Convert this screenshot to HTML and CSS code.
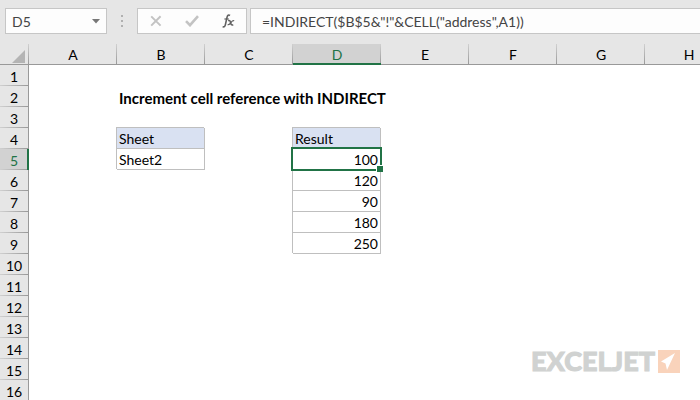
FILE: index.html
```
<!DOCTYPE html>
<html lang="en">
<head>
<meta charset="UTF-8">
<meta name="viewport" content="width=device-width, initial-scale=1">
<title>Increment cell reference with INDIRECT</title>
<link rel="stylesheet" href="styles.css">
</head>

<body>

    <!-- Name box, entry buttons and formula -->
    <div class="formula-bar">
        <div class="name-box">
            <input class="name-box__input" type="text" value="D5" aria-label="Name box">
            <button class="name-box__arrow" type="button" aria-label="Open name list">
                <svg width="8" height="5" viewBox="0 0 8 5"><path d="M0 0h8L4 4.6z" fill="#777"/></svg>
            </button>
        </div>

        <svg class="grip" width="2" height="12" viewBox="0 0 2 12"><path d="M0 0h2v2H0zM0 5h2v2H0zM0 10h2v2H0z" fill="#b0b0b0"/></svg>

        <div class="entry-buttons">
            <button type="button" aria-label="Cancel">
                <svg width="12" height="12" viewBox="0 0 12 12"><path d="M1.2 1.4l9.4 9.2M10.6 1.2L1.2 10.6" fill="none" stroke="#c3c3c3" stroke-width="2"/></svg>
            </button>
            <button type="button" aria-label="Enter">
                <svg width="14" height="12" viewBox="0 0 14 12"><path d="M1 6.2l4 4L13 1.2" fill="none" stroke="#c3c3c3" stroke-width="2.6"/></svg>
            </button>
            <button type="button" aria-label="Insert function">
                <svg width="13" height="14" viewBox="0 0 13 14" fill="none" stroke="#606060">
                    <path d="M8 1.5C6.6.4 5.5 1.2 5 3.4L3.4 10.6C3 12.7 2 13.4.6 12.6" stroke-width="1.6"/>
                    <path d="M2.4 5h4.4" stroke-width="1.2"/>
                    <path d="M6.2 6.8c1.6-.8 2 .2 2.4 2s1 2.8 2.6 1.8" stroke-width="1.6"/>
                    <path d="M12.2 6.8c-1.8-.6-2.6 1-3.6 2.2s-1.6 2.2-3 1.6" stroke-width="1.2"/>
                </svg>
            </button>
        </div>

        <input class="formula-input" type="text" value="=INDIRECT($B$5&amp;&quot;!&quot;&amp;CELL(&quot;address&quot;,A1))" aria-label="Formula">
    </div>

    <div class="sheet">
        <table class="grid">
            <thead>
                <tr>
                    <th class="corner"><svg width="13" height="13" viewBox="0 0 13 13"><path d="M13 0v13H0z" fill="#b4b4b4"/></svg></th>
                    <th>A</th><th>B</th><th>C</th><th class="active">D</th><th>E</th><th>F</th><th>G</th><th>H</th>
                </tr>
            </thead>
            <tbody>
                <tr><th>1</th></tr>
                <tr><th>2</th><td></td><td class="title">Increment cell reference with INDIRECT</td></tr>
                <tr><th>3</th></tr>
                <tr><th>4</th><td></td><td class="boxed heading">Sheet</td><td></td><td class="boxed heading">Result</td></tr>
                <tr><th class="active">5</th><td></td><td class="boxed">Sheet2</td><td></td><td class="boxed number selected">100</td></tr>
                <tr><th>6</th><td></td><td></td><td></td><td class="boxed number">120</td></tr>
                <tr><th>7</th><td></td><td></td><td></td><td class="boxed number">90</td></tr>
                <tr><th>8</th><td></td><td></td><td></td><td class="boxed number">180</td></tr>
                <tr><th>9</th><td></td><td></td><td></td><td class="boxed number">250</td></tr>
                <tr><th>10</th></tr>
                <tr><th>11</th></tr>
                <tr><th>12</th></tr>
                <tr><th>13</th></tr>
                <tr><th>14</th></tr>
                <tr><th>15</th></tr>
                <tr><th>16</th></tr>
            </tbody>
        </table>

        <div class="logo">
            <span>EXCELJET</span>
            <svg width="22" height="23" viewBox="0 0 22 23"><path d="M0 0h22v23H0z" fill="#f9d3bb"/><path d="M17 3L3 11.5l4.5 2L9 20z" fill="#fff"/></svg>
        </div>
    </div>

</body>
</html>
```

FILE: styles.css
```
:root
{
    --chrome: #e6e6e6;
    --chrome-active: #d2d2d2;
    --line: #999999;
    --box-border: #c6c6c6;
    --cell-border: #bfbfbf;
    --green: #217346;
}

*
{
    box-sizing: border-box;
}

body
{
    margin: 0;
    background: #ffffff;
    color: #000000;
    font-family: Lato, "Liberation Sans", sans-serif;
    font-size: 14px;
    overflow: hidden;
}

button, input
{
    border: none;
    padding: 0;
    background: none;
    font: inherit;
    color: #444444;
}

svg
{
    display: block;
}

/* Formula bar */

.formula-bar
{
    display: flex;
    align-items: center;
    padding: 8px 0 10px 5px;
    background: var(--chrome);
}

.name-box, .entry-buttons, .formula-input
{
    height: 26px;
    border: 1px solid var(--box-border);
    background: #fdfdfd;
}

.name-box
{
    display: flex;
    width: 102px;
}

.name-box__input
{
    flex: 1;
    min-width: 0;
    padding-left: 6px;
}

.name-box__arrow
{
    display: flex;
    align-items: center;
    justify-content: center;
    width: 20px;
}

.grip
{
    margin: 0 14px;
}

.entry-buttons
{
    display: flex;
    align-items: center;
    width: 110px;
}

.entry-buttons button
{
    display: flex;
    flex: 1;
    justify-content: center;
}

.formula-input
{
    flex: 1;
    min-width: 0;
    margin-left: 3px;
    padding-left: 11px;
    border-right: none;
}

/* Sheet */

.sheet
{
    position: relative;
    overflow: hidden;
}

.grid
{
    table-layout: fixed;
    width: 733px;
    border-spacing: 0;
    line-height: 18px;
}

.grid th, .grid td
{
    height: 21px;
    padding: 2px 0 0;
    font-weight: normal;
    white-space: nowrap;
}

.grid th
{
    background: linear-gradient(to right, #d0d0d0, var(--line)) bottom / 100% 1px no-repeat var(--chrome);
    border-right: 1px solid var(--line);
}

.grid thead th
{
    background: linear-gradient(#d0d0d0, var(--line)) right / 1px 100% no-repeat var(--chrome);
    border-right: none;
    border-bottom: 1px solid var(--line);
}

.grid thead .corner
{
    width: 29px;
    padding: 4px 0 0 12px;
}

.grid .active
{
    background-color: var(--chrome-active);
    color: var(--green);
}

.grid tbody .active
{
    border-right-color: var(--green);
    box-shadow: inset -1px 0 var(--green);
}

.grid thead .active
{
    border-bottom-color: var(--green);
    box-shadow: inset 0 -1px var(--green);
}

.grid td
{
    padding-left: 2px;
}

.grid .title
{
    font-size: 15px;
    font-weight: bold;
}

.grid .boxed
{
    border-right: 1px solid var(--cell-border);
    border-bottom: 1px solid var(--cell-border);
    box-shadow: -1px -1px 0 var(--cell-border);
}

.grid .heading
{
    background: #d9e1f2;
}

.grid .number
{
    padding-right: 2px;
    text-align: right;
}

/* Selection frame with its fill handle */

.selected
{
    position: relative;
}

.selected::before
{
    content: "";
    position: absolute;
    inset: -2px;
    border: 2px solid var(--green);
}

.selected::after
{
    content: "";
    position: absolute;
    right: -3px;
    bottom: -3px;
    width: 6px;
    height: 6px;
    border: 1px solid #ffffff;
    border-right: none;
    border-bottom: none;
    background: var(--green);
}

.logo
{
    position: absolute;
    right: 20px;
    bottom: 22px;
    display: flex;
    align-items: center;
    gap: 3px;
    color: #d0d2d1;
    font-size: 27px;
    font-weight: 900;
    line-height: 36px;
    -webkit-text-stroke: 1px #d0d2d1;
}
```
